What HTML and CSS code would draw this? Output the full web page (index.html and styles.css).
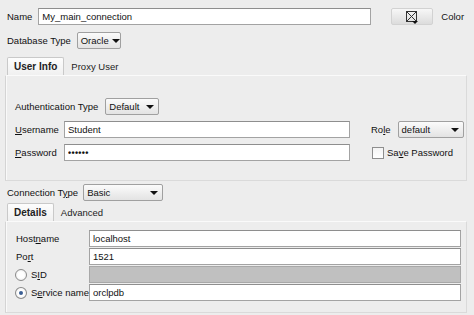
FILE: index.html
```html
<!DOCTYPE html>
<html lang="en">
<head>
  <meta charset="UTF-8">
  <title>New Connection</title>
  <link rel="stylesheet" href="styles.css">
</head>
<body>
  <div class="dialog">
    <div class="row name-row">
      <label class="lbl">Name</label>
      <input class="field name-field" type="text" value="My_main_connection">
      <button class="color-btn" type="button">
        <svg width="14" height="14" viewBox="0 0 14 14">
          <rect x="1.5" y="1.5" width="10" height="10" fill="none" stroke="#333" stroke-width="1"/>
          <path d="M1.5 1.5 L11.5 11.5 M11.5 1.5 L1.5 11.5" stroke="#333" stroke-width="1"/>
          <path d="M7 11 L13 11 L10 14 Z" fill="#111"/>
        </svg>
      </button>
      <span class="lbl color-lbl">Color</span>
    </div>

    <div class="row db-row">
      <label class="lbl">Database Type</label>
      <div class="combo db-combo"><span>Oracle</span><i class="arrow"></i></div>
    </div>

    <div class="tabs">
      <div class="tab active">User Info</div>
      <div class="tab">Proxy User</div>
    </div>
    <div class="panel user-panel">
      <div class="row auth-row">
        <label class="lbl">Authentication Type</label>
        <div class="combo auth-combo"><span>Default</span><i class="arrow"></i></div>
      </div>
      <div class="row cred-row">
        <label class="lbl cred-lbl"><u>U</u>sername</label>
        <input class="field cred-field" type="text" value="Student">
        <label class="lbl role-lbl">Ro<u>l</u>e</label>
        <div class="combo role-combo"><span>default</span><i class="arrow"></i></div>
      </div>
      <div class="row cred-row">
        <label class="lbl cred-lbl"><u>P</u>assword</label>
        <input class="field cred-field pw" type="text" value="••••••">
        <span class="check"></span>
        <label class="lbl">Sa<u>v</u>e Password</label>
      </div>
    </div>

    <div class="row conn-row">
      <label class="lbl">Connection T<u>y</u>pe</label>
      <div class="combo conn-combo"><span>Basic</span><i class="arrow"></i></div>
    </div>

    <div class="tabs">
      <div class="tab active">Details</div>
      <div class="tab">Advanced</div>
    </div>
    <div class="panel details-panel">
      <div class="detail-grid">
        <label class="lbl">Host<u>n</u>ame</label>
        <input class="field" type="text" value="localhost">
        <label class="lbl">Po<u>r</u>t</label>
        <input class="field" type="text" value="1521">
        <label class="lbl radio-lbl"><span class="radio"></span>S<u>I</u>D</label>
        <input class="field disabled" type="text" value="" disabled>
        <label class="lbl radio-lbl"><span class="radio on"></span>S<u>e</u>rvice name</label>
        <input class="field" type="text" value="orclpdb">
      </div>
    </div>
  </div>
</body>
</html>
```

FILE: styles.css
```css
* { margin: 0; padding: 0; box-sizing: border-box; }
body {
  background: #ededed;
  font-family: 'Liberation Sans', Arial, sans-serif;
  font-size: 9.5px;
  color: #111;
}
.dialog { padding: 8px 7px 0 5px; width: 474px; }
.row { display: flex; align-items: center; }
.lbl { white-space: nowrap; }
.lbl u { text-decoration: underline; text-underline-offset: 1px; }

.field {
  height: 17px;
  border: 1px solid #a3a3a3;
  border-top-color: #8e8e8e;
  background: #fff;
  font: inherit;
  color: #111;
  padding: 0 3px;
  outline: none;
}
.field.disabled { background: #c0c0c0; border-color: #a8a8a8; }

.name-row { padding-left: 2px; }
.name-field { width: 333px; margin-left: 6px; }
.color-btn {
  width: 42px;
  height: 17px;
  margin-left: 20px;
  border: 1px solid #d2d2d2;
  border-radius: 2px;
  background: linear-gradient(#f7f7f7, #dcdcdc);
  display: flex;
  align-items: center;
  justify-content: center;
}
.color-lbl { margin-left: 8px; }

.combo {
  height: 17px;
  border: 1px solid #a0a0a0;
  border-radius: 2px;
  background: linear-gradient(#fbfbfb, #e3e3e3);
  display: flex;
  align-items: center;
  justify-content: space-between;
  padding: 0 4px 0 3px;
}
.arrow {
  width: 0; height: 0;
  border-left: 4px solid transparent;
  border-right: 4px solid transparent;
  border-top: 4px solid #111;
}
.db-row { margin-top: 7px; padding-left: 2px; }
.db-combo { width: 44px; margin-left: 6px; }
.db-combo span { margin-right: 3px; }

.tabs { display: flex; align-items: flex-end; margin-top: 8px; padding-left: 2px; }
.tab {
  height: 17px;
  padding: 0 7px;
  display: flex;
  align-items: center;
  color: #222;
}
.tab.active {
  height: 18px;
  padding: 0 6px;
  font-size: 10px;
  font-weight: bold;
  border: 1px solid #c9c9c9;
  border-bottom: none;
  border-radius: 2px 2px 0 0;
  background: linear-gradient(#fdfdfd, #f0f0f0);
}
.panel {
  border: 1px solid #dadada;
  border-top-color: #fafafa;
  border-left-color: #d4d4d4;
  box-shadow: inset 1px 0 0 #f9f9f9;
  width: 462px;
}
.user-panel { height: 106px; padding: 22px 0 0 9px; }
.auth-combo { width: 54px; margin-left: 7px; }
.cred-row { margin-top: 6px; }
.cred-lbl { width: 49px; }
.cred-field { width: 286px; }
.role-lbl { margin-left: 21px; }
.role-combo { width: 66px; margin-left: 7px; }
.pw { font-size: 9px; letter-spacing: 0.3px; font-weight: bold; }
.check {
  width: 12px; height: 12px;
  margin-left: 22px; margin-right: 3px;
  border: 1px solid #8e8e8e;
  background: linear-gradient(#f4f4f4, #ffffff);
}

.conn-row { margin-top: 3px; padding-left: 2px; }
.conn-combo { width: 80px; margin-left: 5px; }
.conn-row + .tabs { margin-top: 2px; }

.details-panel { height: 92px; padding: 8px 5px 0 10px; }
.detail-grid {
  display: grid;
  grid-template-columns: 73px 372px;
  row-gap: 1px;
  align-items: center;
}
.detail-grid .field { width: 372px; }
.radio-lbl { display: flex; align-items: center; margin-left: -1px; }
.radio {
  width: 12px; height: 12px;
  border-radius: 50%;
  border: 1px solid #8a8a8a;
  background: radial-gradient(circle, #fff 40%, #e6e6e6);
  margin-right: 4px;
  position: relative;
}
.radio.on::after {
  content: '';
  position: absolute;
  left: 3px; top: 3px;
  width: 4px; height: 4px;
  border-radius: 50%;
  background: #3b5f94;
}
```
